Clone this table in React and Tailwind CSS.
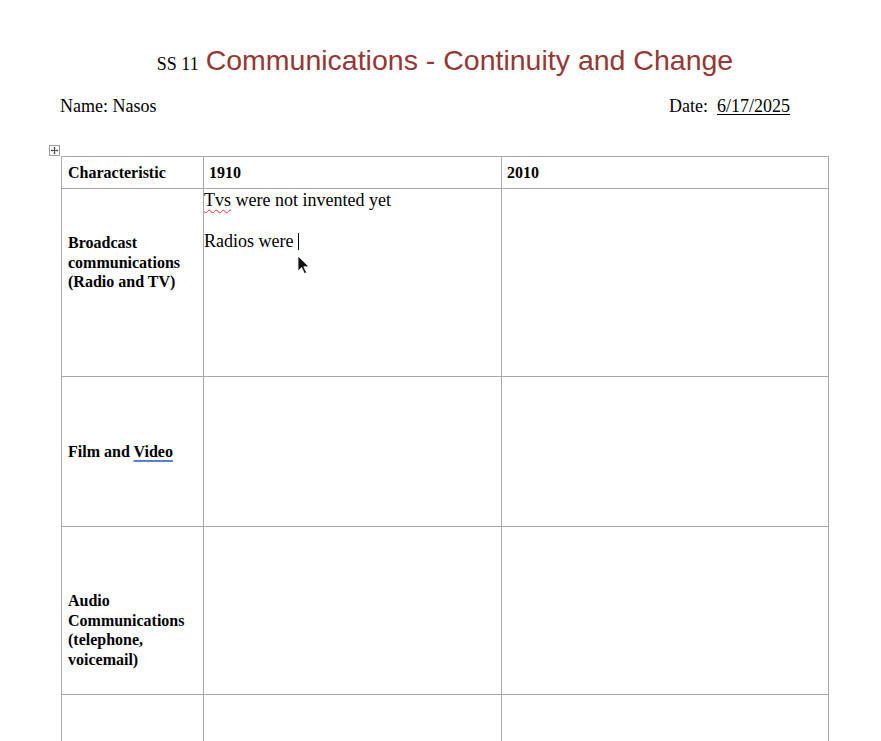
import React from 'react'

const serif = { fontFamily: '"Liberation Serif", "Times New Roman", serif' }

function MoveHandle() {
  return (
    <svg width="11" height="11" viewBox="0 0 11 11" className="absolute left-[49px] top-[145px]">
      <rect x="0.5" y="0.5" width="10" height="10" fill="#fff" stroke="#9a9a9a" />
      <path d="M5.5 2v7M2 5.5h7" stroke="#444" strokeWidth="1" />
      <path d="M5.5 1.8l-1.3 1.4h2.6zM5.5 9.2l-1.3-1.4h2.6zM1.8 5.5l1.4-1.3v2.6zM9.2 5.5l-1.4-1.3v2.6z" fill="#444" />
    </svg>
  )
}

function Pointer() {
  return (
    <svg width="14" height="20" viewBox="0 0 14 20" className="absolute left-[297px] top-[255px]">
      <path d="M1 1v15l3.6-3.4 2.8 6 2.2-1-2.8-5.8H12z" fill="#111" stroke="#fff" strokeWidth="0.8" />
    </svg>
  )
}

const cell = 'border border-[#a8a8a8] p-0'

export default function App() {
  return (
    <div className="relative w-[881px] h-[741px] overflow-hidden bg-white text-black" style={serif}>
      <div className="flex items-baseline justify-center pt-[43px] pl-[9px]">
        <span className="text-[18px] mr-[7px]">SS 11</span>
        <span className="text-[28.5px] text-[#953735] leading-[34px]" style={{ fontFamily: '"Liberation Sans", Arial, sans-serif' }}>
          Communications - Continuity and Change
        </span>
      </div>

      <div className="flex justify-between items-baseline pl-[60px] pr-[91px] mt-[15px]">
        <span className="text-[18px]">Name: Nasos</span>
        <span className="text-[18px]">
          Date:&nbsp; <span className="underline underline-offset-2">6/17/2025</span>
        </span>
      </div>

      <MoveHandle />

      <table className="absolute left-[61px] top-[156px] border-collapse table-fixed w-[767px]">
        <colgroup>
          <col className="w-[142px]" />
          <col className="w-[298px]" />
          <col className="w-[327px]" />
        </colgroup>
        <tbody>
          <tr className="h-[32px] text-[16px] font-bold">
            <td className={`${cell} align-top pt-[4px] pl-[6px]`}>Characteristic</td>
            <td className={`${cell} align-top pt-[4px] pl-[5px]`}>1910</td>
            <td className={`${cell} align-top pt-[4px] pl-[5px]`}>2010</td>
          </tr>
          <tr className="h-[188px]">
            <td className={`${cell} align-top pl-[6px] pt-[44px] text-[16px] font-bold leading-[19.5px]`}>
              Broadcast communications (Radio and TV)
            </td>
            <td className={`${cell} align-top text-[18px] leading-[20.5px] pt-[1px]`}>
              <p>
                <span className="underline decoration-wavy decoration-[#e03030] decoration-1 underline-offset-[3px]">Tvs</span> were not invented yet
              </p>
              <p className="mt-[20.5px]">
                Radios were <span className="inline-block w-px h-[17px] bg-black align-[-3px]"></span>
              </p>
            </td>
            <td className={cell}></td>
          </tr>
          <tr className="h-[150px]">
            <td className={`${cell} align-middle pl-[6px] text-[16px] font-bold`}>
              Film and <span className="underline decoration-[#5b7fd6] decoration-2 underline-offset-[3px]">Video</span>
            </td>
            <td className={cell}></td>
            <td className={cell}></td>
          </tr>
          <tr className="h-[168px]">
            <td className={`${cell} align-top pl-[6px] pt-[64px] text-[16px] font-bold leading-[19.7px]`}>
              Audio Communications (telephone, voicemail)
            </td>
            <td className={cell}></td>
            <td className={cell}></td>
          </tr>
          <tr className="h-[80px]">
            <td className={cell}></td>
            <td className={cell}></td>
            <td className={cell}></td>
          </tr>
        </tbody>
      </table>

      <Pointer />
    </div>
  )
}
